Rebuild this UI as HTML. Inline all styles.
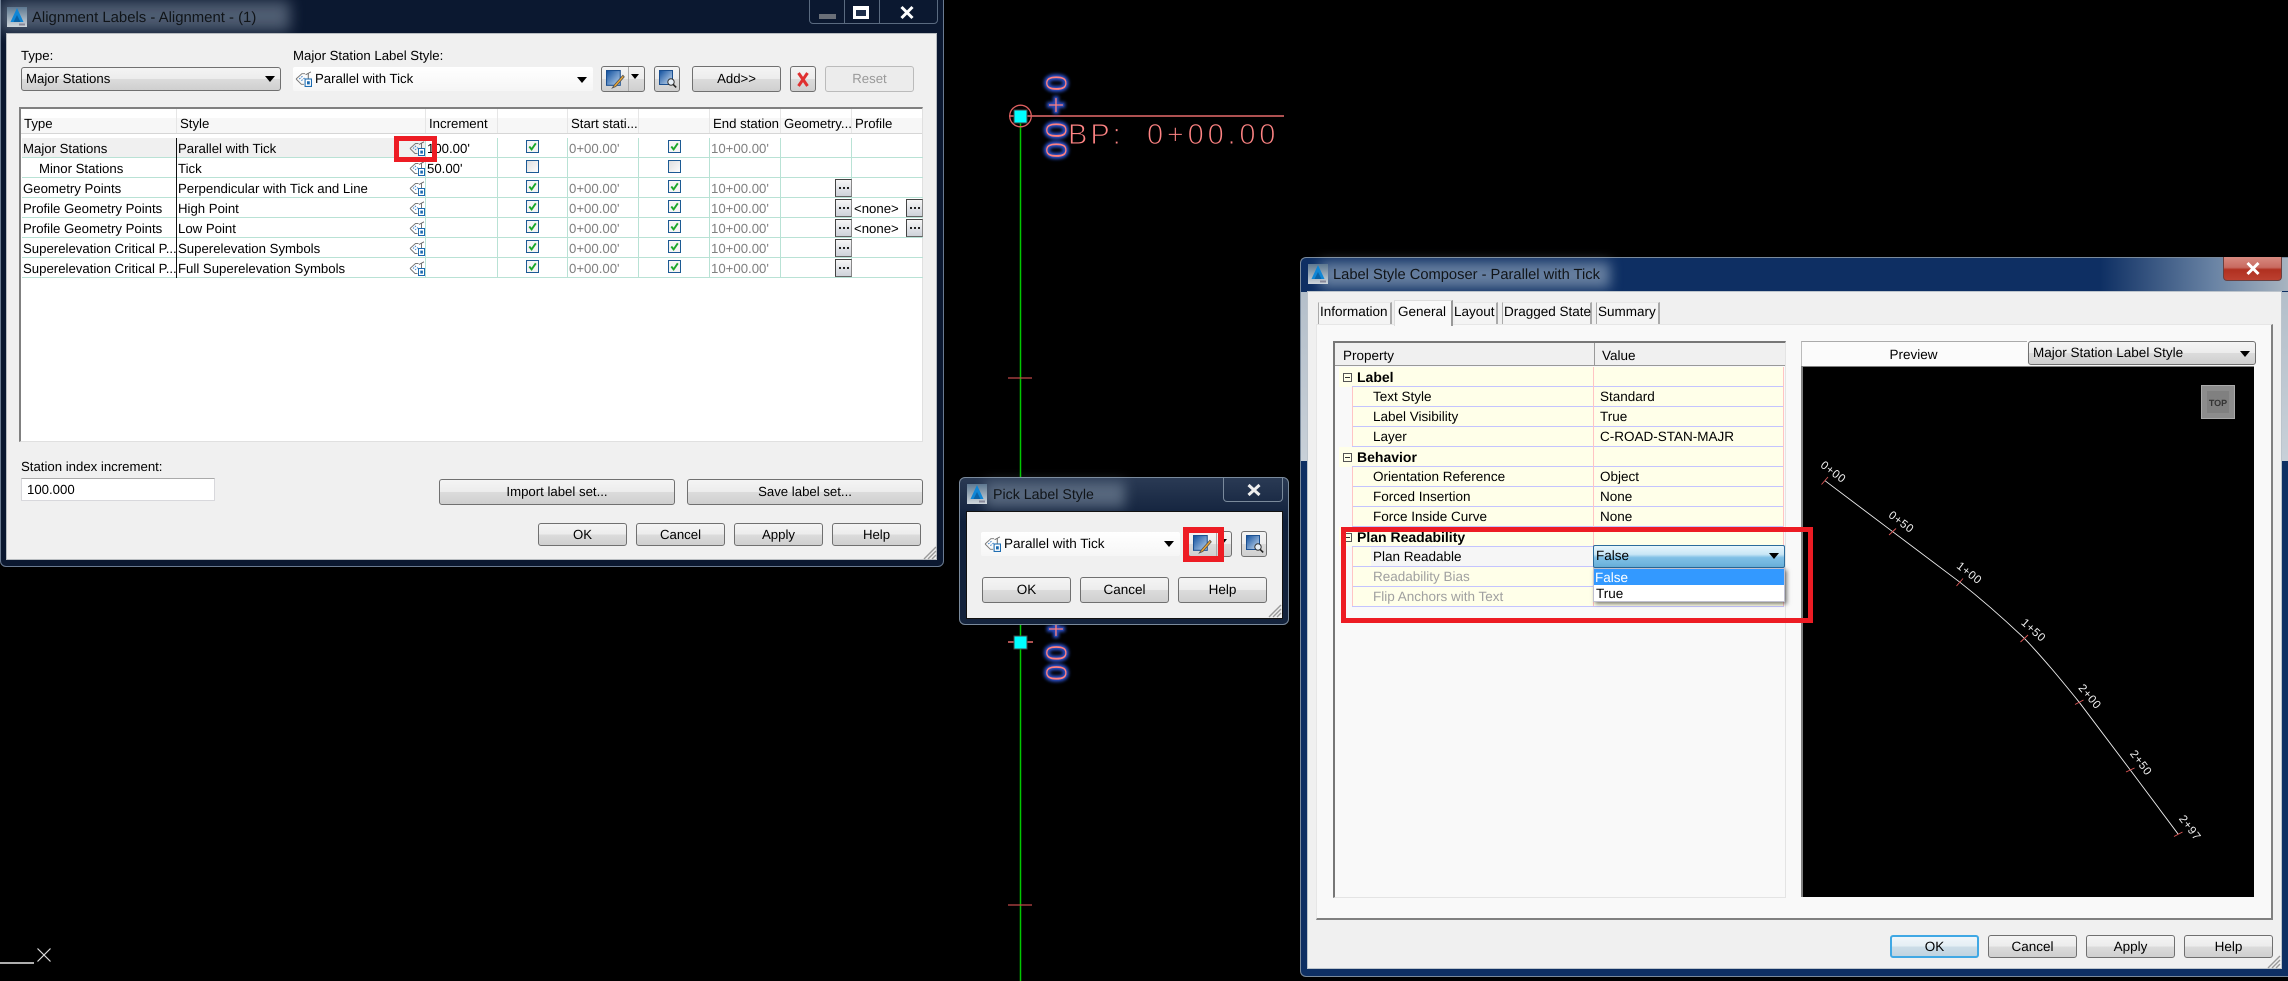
<!DOCTYPE html>
<html><head><meta charset="utf-8"><title>Alignment Labels</title>
<style>
html,body{margin:0;padding:0;background:#000;width:2288px;height:981px;overflow:hidden}
body{position:relative;font-family:"Liberation Sans",sans-serif;font-size:13.5px;color:#000;text-rendering:geometricPrecision}
.a,.t,.b,.r,.c{position:absolute;box-sizing:border-box}
.t{height:20px;line-height:20px;white-space:nowrap;margin-top:1px}
.g{color:#808080}
.d{color:#a0a0a0}
.h{font-weight:bold;font-size:14px}
.b{border:1px solid #707070;border-radius:3px;background:linear-gradient(#f4f4f4 0,#ececec 50%,#dcdcdc 50%,#cfcfcf 100%);text-align:center;white-space:nowrap}
.r{border:5px solid #ed1c24;z-index:5}
.c{background:linear-gradient(#fff,#f6f6f6);border-radius:2px}
.l{position:absolute}
svg.i{position:absolute;overflow:visible}
.ar{position:absolute;width:0;height:0;border-left:5px solid transparent;border-right:5px solid transparent;border-top:6px solid #000}
.e{position:absolute;box-sizing:border-box;width:17px;height:18px;border:1px solid #444;border-right-color:#888;border-bottom-color:#666;background:linear-gradient(#f6f6f6,#ced2da)}
.e:after{content:"";position:absolute;left:3px;top:7px;width:2px;height:2px;background:#222;box-shadow:4px 0 #222,8px 0 #222}
</style></head><body>

<svg width="0" height="0" style="position:absolute"><defs>
<symbol id="tag" viewBox="0 0 16 15">
<path d="M1 7.5L6.5 2.5H9.5M1 7.5L6 12.5H8.5" fill="none" stroke="#777" stroke-width=".9"/>
<path d="M4 7.5L7.5 4.5M6 9L9 6.5" fill="none" stroke="#3a80c8" stroke-width=".9" stroke-dasharray="1.5 1"/>
<path d="M10 3.5L15 .8M12.5 2V7" fill="none" stroke="#666" stroke-width=".9"/>
<rect x="9.5" y="7.5" width="6" height="7" fill="#fff" stroke="#1a6ab0"/>
<rect x="11.3" y="9.6" width="2.6" height="3" fill="#1a6ab0"/>
</symbol>
<symbol id="chk" viewBox="0 0 13 13">
<rect x=".5" y=".5" width="12" height="12" fill="#f4f4f4" stroke="#1c5a94"/>
<path d="M3.3 6.5L5.6 9.4L9.8 3.3" fill="none" stroke="#1aa82a" stroke-width="1.9"/>
</symbol>
<symbol id="unc" viewBox="0 0 13 13">
<linearGradient id="ug" x1="0" y1="0" x2="1" y2="1"><stop offset="0" stop-color="#dcdcdc"/><stop offset="1" stop-color="#fff"/></linearGradient>
<rect x=".5" y=".5" width="12" height="12" fill="url(#ug)" stroke="#1c5a94"/>
</symbol>
<symbol id="cad" viewBox="0 0 20 20">
<linearGradient id="cg" x1="0" y1="0" x2="0" y2="1"><stop offset="0" stop-color="#5d7890"/><stop offset="1" stop-color="#cfd6dc"/></linearGradient>
<rect width="20" height="20" fill="url(#cg)"/>
<path d="M10 1L16.5 15H3.5Z" fill="#0f86d6"/>
<path d="M10 8L13.5 15H6.5Z" fill="#0a63a8"/>
<rect x="12" y="16.5" width="6" height="2" fill="#889"/>
</symbol>
<symbol id="edit" viewBox="0 0 18 18">
<linearGradient id="eg" x1="0" y1="0" x2="1" y2="1"><stop offset="0" stop-color="#0f4f9e"/><stop offset="1" stop-color="#bcd4ee"/></linearGradient>
<rect x=".5" y=".5" width="13" height="14" fill="url(#eg)" stroke="#1a4f90"/>
<path d="M16 5L8 14L6 17L9.3 15.6L17.3 6.5Z" fill="#f0a830" stroke="#555" stroke-width=".8"/>
</symbol>
<symbol id="view" viewBox="0 0 18 18">
<linearGradient id="vg" x1="0" y1="0" x2="1" y2="1"><stop offset="0" stop-color="#0f4f9e"/><stop offset="1" stop-color="#cfe0f2"/></linearGradient>
<rect x=".5" y=".5" width="13" height="14" fill="url(#vg)" stroke="#1a4f90"/>
<circle cx="12" cy="12" r="3.2" fill="#e6eef6" stroke="#333"/>
<path d="M14.2 14.4L17.2 17.4" stroke="#222" stroke-width="1.6"/>
</symbol>
<symbol id="grip" viewBox="0 0 14 14">
<path d="M13 1L1 13M13 5L5 13M13 9L9 13" stroke="#9a9a9a" stroke-width="1.4"/>
</symbol>
<filter id="bl" x="-30%" y="-30%" width="160%" height="160%"><feGaussianBlur stdDeviation="1.6"/></filter>
</defs></svg>

<!-- CAD background -->
<svg class="i" style="left:0;top:0" width="2288" height="981">
<path d="M1020.5 123V981" stroke="#00c800" stroke-width="1.5"/>
<path d="M1008 378H1032M1008 905H1032" stroke="#c04848" stroke-width="1.2"/>
<path d="M1009 116H1284" stroke="#e86c6c" stroke-width="1.5"/>
<circle cx="1020.5" cy="116" r="10.8" fill="none" stroke="#e06060" stroke-width="1.3"/>
<rect x="1014" y="110" width="13" height="13" fill="#00ffff" stroke="#444"/>
<path d="M1008 642H1033" stroke="#e86c6c" stroke-width="1.5"/>
<rect x="1014" y="636" width="13" height="13" fill="#00ffff" stroke="#444"/>

<g font-family="'Liberation Sans',sans-serif" font-size="30">
<g filter="url(#bl)" fill="none" stroke="#2a50c8" stroke-width="3.5">
<text transform="translate(1046,0) rotate(90)" x="74.7 96.2 121.7 141.7">0+00</text>
<text transform="translate(1046,0) rotate(90)" x="599 620.2 644.5 664.5">0+00</text>
</g>
<g fill="#ff8080" stroke="#2848b0" stroke-width=".8">
<text transform="translate(1046,0) rotate(90)" x="74.7 96.2 121.7 141.7">0+00</text>
<text transform="translate(1046,0) rotate(90)" x="599 620.2 644.5 664.5">0+00</text>
</g>
</g>
<g font-family="'Liberation Sans',sans-serif" font-size="29" fill="#ff8484" stroke="#000" stroke-width="1" style="paint-order:fill stroke">
<text x="1068" y="144" letter-spacing="3">BP:</text>
<text x="1147" y="144" letter-spacing="3.8">0+00.00</text>
</g>
<path d="M0 963H34" stroke="#e8e8e8" stroke-width="1.4"/>
<path d="M37.5 948.5L50.5 961.5M50.5 948.5L37.5 961.5" stroke="#ddd" stroke-width="1.2"/>
</svg>

<!-- ============ Alignment Labels dialog ============ -->
<div style="font-size:13.2px">
<div class="a" style="left:0;top:-8px;width:944px;height:575px;background:#0b1830;border:1px solid #6a7a90;border-radius:6px"></div>
<div class="a" style="left:0;top:1px;width:290px;height:30px;background:rgba(190,205,220,.38);filter:blur(7px)"></div>
<svg class="i" style="left:7px;top:7px" width="20" height="20"><use href="#cad"/></svg>
<div class="t" style="left:32px;top:7px;font-size:14.9px;color:#101418">Alignment Labels - Alignment - (1)</div>
<div class="a" style="left:809px;top:-3px;width:129px;height:27px;border:1px solid #5a6a80;border-radius:0 0 4px 4px"></div>
<div class="a" style="left:844px;top:0;width:1px;height:24px;background:#5a6a80"></div>
<div class="a" style="left:879px;top:0;width:1px;height:24px;background:#5a6a80"></div>
<div class="a" style="left:819px;top:14px;width:17px;height:5px;background:#6a6f78"></div>
<div class="a" style="left:853px;top:6px;width:16px;height:13px;border:3px solid #fff;border-top-width:4px;background:#20304c"></div>
<svg class="i" style="left:900px;top:6px" width="14" height="13"><path d="M1.5 1L12.5 12M12.5 1L1.5 12" stroke="#fff" stroke-width="3"/></svg>

<div class="a" style="left:6px;top:33px;width:931px;height:527px;background:#f0f0f0;border:1px solid #b8bcc0"></div>

<div class="t" style="left:21px;top:45px">Type:</div>
<div class="t" style="left:293px;top:45px">Major Station Label Style:</div>
<div class="b" style="left:21px;top:67px;width:260px;height:24px;text-align:left;padding-left:4px;line-height:22px">Major Stations</div>
<div class="ar" style="left:265px;top:76px"></div>
<div class="c" style="left:293px;top:67px;width:300px;height:24px"></div>
<svg class="i" style="left:295px;top:71px" width="17" height="16"><use href="#tag"/></svg>
<div class="t" style="left:315px;top:68px">Parallel with Tick</div>
<div class="ar" style="left:577px;top:77px"></div>
<div class="b" style="left:601px;top:66px;width:44px;height:26px"></div>
<div class="a" style="left:628px;top:67px;width:1px;height:24px;background:#aaa"></div>
<svg class="i" style="left:606px;top:70px" width="19" height="19"><use href="#edit"/></svg>
<div class="ar" style="left:631px;top:74px;border-left-width:4px;border-right-width:4px;border-top-width:5px"></div>
<div class="b" style="left:654px;top:66px;width:26px;height:26px"></div>
<svg class="i" style="left:659px;top:70px" width="18" height="18"><use href="#view"/></svg>
<div class="b" style="left:692px;top:66px;width:89px;height:26px;line-height:24px">Add&gt;&gt;</div>
<div class="b" style="left:790px;top:66px;width:26px;height:26px"></div>
<svg class="i" style="left:797px;top:72px" width="12" height="15"><path d="M1.5 1L10.5 14M10.5 1L1.5 14" stroke="#e03030" stroke-width="3"/></svg>
<div class="b" style="left:825px;top:66px;width:89px;height:26px;line-height:24px;background:#ececec;border-color:#bbb;color:#999">Reset</div>

<!-- table -->
<div class="a" style="left:19px;top:107px;width:904px;height:335px;background:#fff;border-top:2px solid #808080;border-left:2px solid #808080;border-right:1px solid #e0e0e0;border-bottom:1px solid #e0e0e0"></div>
<div class="a" style="left:21px;top:118px;width:901px;height:15px;background:#f7f7f7"></div>
<div class="a" style="left:21px;top:133px;width:901px;height:1px;background:#d6d6d6"></div>
<div class="a" style="left:176px;top:109px;width:1px;height:24px;background:#e6e6e6"></div>
<div class="a" style="left:425px;top:109px;width:1px;height:24px;background:#e6e6e6"></div>
<div class="a" style="left:497px;top:109px;width:1px;height:24px;background:#e6e6e6"></div>
<div class="a" style="left:567px;top:109px;width:1px;height:24px;background:#e6e6e6"></div>
<div class="a" style="left:638px;top:109px;width:1px;height:24px;background:#e6e6e6"></div>
<div class="a" style="left:709px;top:109px;width:1px;height:24px;background:#e6e6e6"></div>
<div class="a" style="left:780px;top:109px;width:1px;height:24px;background:#e6e6e6"></div>
<div class="a" style="left:851px;top:109px;width:1px;height:24px;background:#e6e6e6"></div>
<div class="t" style="left:24px;top:113px">Type</div>
<div class="t" style="left:180px;top:113px">Style</div>
<div class="t" style="left:429px;top:113px">Increment</div>
<div class="t" style="left:571px;top:113px">Start stati...</div>
<div class="t" style="left:713px;top:113px">End station</div>
<div class="t" style="left:784px;top:113px">Geometry...</div>
<div class="t" style="left:855px;top:113px">Profile</div>

<div class="a" style="left:22px;top:138px;width:403px;height:19px;background:#f0f0f0"></div>
<div class="a" style="left:22px;top:157px;width:901px;height:1px;background:#b9e2d5"></div>
<div class="a" style="left:22px;top:177px;width:901px;height:1px;background:#b9e2d5"></div>
<div class="a" style="left:22px;top:197px;width:901px;height:1px;background:#b9e2d5"></div>
<div class="a" style="left:22px;top:217px;width:901px;height:1px;background:#b9e2d5"></div>
<div class="a" style="left:22px;top:237px;width:901px;height:1px;background:#b9e2d5"></div>
<div class="a" style="left:22px;top:257px;width:901px;height:1px;background:#b9e2d5"></div>
<div class="a" style="left:22px;top:277px;width:901px;height:1px;background:#b9e2d5"></div>
<div class="a" style="left:176px;top:138px;width:1px;height:140px;background:#111"></div>
<div class="a" style="left:425px;top:138px;width:1px;height:140px;background:#b9e2d5"></div>
<div class="a" style="left:497px;top:138px;width:1px;height:140px;background:#b9e2d5"></div>
<div class="a" style="left:567px;top:138px;width:1px;height:140px;background:#b9e2d5"></div>
<div class="a" style="left:638px;top:138px;width:1px;height:140px;background:#b9e2d5"></div>
<div class="a" style="left:709px;top:138px;width:1px;height:140px;background:#b9e2d5"></div>
<div class="a" style="left:780px;top:138px;width:1px;height:140px;background:#b9e2d5"></div>
<div class="a" style="left:851px;top:138px;width:1px;height:140px;background:#b9e2d5"></div>

<div class="t" style="left:23px;top:138px">Major Stations</div><div class="t" style="left:178px;top:138px">Parallel with Tick</div><div class="t" style="left:427px;top:138px">100.00'</div>
<div class="t" style="left:39px;top:158px">Minor Stations</div><div class="t" style="left:178px;top:158px">Tick</div><div class="t" style="left:427px;top:158px">50.00'</div>
<div class="t" style="left:23px;top:178px">Geometry Points</div><div class="t" style="left:178px;top:178px">Perpendicular with Tick and Line</div>
<div class="t" style="left:23px;top:198px">Profile Geometry Points</div><div class="t" style="left:178px;top:198px">High Point</div>
<div class="t" style="left:23px;top:218px">Profile Geometry Points</div><div class="t" style="left:178px;top:218px">Low Point</div>
<div class="t" style="left:23px;top:238px">Superelevation Critical P...</div><div class="t" style="left:178px;top:238px">Superelevation Symbols</div>
<div class="t" style="left:23px;top:258px">Superelevation Critical P...</div><div class="t" style="left:178px;top:258px">Full Superelevation Symbols</div>

<svg class="i" style="left:409px;top:141px" width="16" height="15"><use href="#tag"/></svg>
<svg class="i" style="left:409px;top:161px" width="16" height="15"><use href="#tag"/></svg>
<svg class="i" style="left:409px;top:181px" width="16" height="15"><use href="#tag"/></svg>
<svg class="i" style="left:409px;top:201px" width="16" height="15"><use href="#tag"/></svg>
<svg class="i" style="left:409px;top:221px" width="16" height="15"><use href="#tag"/></svg>
<svg class="i" style="left:409px;top:241px" width="16" height="15"><use href="#tag"/></svg>
<svg class="i" style="left:409px;top:261px" width="16" height="15"><use href="#tag"/></svg>

<svg class="i" style="left:526px;top:140px" width="13" height="13"><use href="#chk"/></svg><svg class="i" style="left:668px;top:140px" width="13" height="13"><use href="#chk"/></svg>
<svg class="i" style="left:526px;top:160px" width="13" height="13"><use href="#unc"/></svg><svg class="i" style="left:668px;top:160px" width="13" height="13"><use href="#unc"/></svg>
<svg class="i" style="left:526px;top:180px" width="13" height="13"><use href="#chk"/></svg><svg class="i" style="left:668px;top:180px" width="13" height="13"><use href="#chk"/></svg>
<svg class="i" style="left:526px;top:200px" width="13" height="13"><use href="#chk"/></svg><svg class="i" style="left:668px;top:200px" width="13" height="13"><use href="#chk"/></svg>
<svg class="i" style="left:526px;top:220px" width="13" height="13"><use href="#chk"/></svg><svg class="i" style="left:668px;top:220px" width="13" height="13"><use href="#chk"/></svg>
<svg class="i" style="left:526px;top:240px" width="13" height="13"><use href="#chk"/></svg><svg class="i" style="left:668px;top:240px" width="13" height="13"><use href="#chk"/></svg>
<svg class="i" style="left:526px;top:260px" width="13" height="13"><use href="#chk"/></svg><svg class="i" style="left:668px;top:260px" width="13" height="13"><use href="#chk"/></svg>

<div class="t g" style="left:569px;top:138px">0+00.00'</div><div class="t g" style="left:711px;top:138px">10+00.00'</div>
<div class="t g" style="left:569px;top:178px">0+00.00'</div><div class="t g" style="left:711px;top:178px">10+00.00'</div>
<div class="t g" style="left:569px;top:198px">0+00.00'</div><div class="t g" style="left:711px;top:198px">10+00.00'</div>
<div class="t g" style="left:569px;top:218px">0+00.00'</div><div class="t g" style="left:711px;top:218px">10+00.00'</div>
<div class="t g" style="left:569px;top:238px">0+00.00'</div><div class="t g" style="left:711px;top:238px">10+00.00'</div>
<div class="t g" style="left:569px;top:258px">0+00.00'</div><div class="t g" style="left:711px;top:258px">10+00.00'</div>

<div class="e" style="left:835px;top:179px"></div>
<div class="e" style="left:835px;top:199px"></div>
<div class="e" style="left:835px;top:219px"></div>
<div class="e" style="left:835px;top:239px"></div>
<div class="e" style="left:835px;top:259px"></div>
<div class="e" style="left:906px;top:199px"></div>
<div class="e" style="left:906px;top:219px"></div>
<div class="t" style="left:854px;top:198px">&lt;none&gt;</div>
<div class="t" style="left:854px;top:218px">&lt;none&gt;</div>

<div class="r" style="left:394px;top:136px;width:43px;height:26px"></div>

<div class="t" style="left:21px;top:456px">Station index increment:</div>
<div class="a" style="left:21px;top:478px;width:194px;height:23px;background:#fff;border:1px solid #d8d8dc;border-top-color:#aaa"></div>
<div class="t" style="left:27px;top:479px">100.000</div>
<div class="b" style="left:439px;top:479px;width:236px;height:26px;line-height:24px">Import label set...</div>
<div class="b" style="left:687px;top:479px;width:236px;height:26px;line-height:24px">Save label set...</div>
<div class="b" style="left:538px;top:523px;width:89px;height:23px;line-height:21px">OK</div>
<div class="b" style="left:636px;top:523px;width:89px;height:23px;line-height:21px">Cancel</div>
<div class="b" style="left:734px;top:523px;width:89px;height:23px;line-height:21px">Apply</div>
<div class="b" style="left:832px;top:523px;width:89px;height:23px;line-height:21px">Help</div>
<svg class="i" style="left:923px;top:546px" width="14" height="14"><use href="#grip"/></svg>
</div>

<!-- ============ Pick Label Style dialog ============ -->
<div class="a" style="left:959px;top:477px;width:330px;height:148px;background:linear-gradient(#2a3a54,#0f1f3a 30%,#14233c);border:1px solid #7a8a9c;border-radius:6px"></div>
<div class="a" style="left:985px;top:482px;width:140px;height:26px;background:rgba(190,205,220,.35);filter:blur(6px)"></div>
<svg class="i" style="left:967px;top:484px" width="20" height="20"><use href="#cad"/></svg>
<div class="t" style="left:993px;top:484px;font-size:14.2px;color:#101418">Pick Label Style</div>
<div class="a" style="left:1223px;top:477px;width:60px;height:25px;border:1px solid #7a8a9c;border-top:0;border-radius:0 0 4px 4px"></div>
<svg class="i" style="left:1247px;top:484px" width="14" height="12"><path d="M1.5 1L12.5 11M12.5 1L1.5 11" stroke="#eee" stroke-width="3"/></svg>
<div class="a" style="left:966px;top:511px;width:317px;height:108px;background:#f0f0f0;border:1px solid #111"></div>
<div class="c" style="left:981px;top:532px;width:199px;height:24px"></div>
<svg class="i" style="left:984px;top:536px" width="17" height="16"><use href="#tag"/></svg>
<div class="t" style="left:1004px;top:533px">Parallel with Tick</div>
<div class="ar" style="left:1164px;top:541px"></div>
<div class="b" style="left:1188px;top:531px;width:44px;height:26px"></div>
<div class="a" style="left:1216px;top:532px;width:1px;height:24px;background:#aaa"></div>
<svg class="i" style="left:1193px;top:535px" width="19" height="19"><use href="#edit"/></svg>
<div class="ar" style="left:1219px;top:539px;border-left-width:4px;border-right-width:4px;border-top-width:5px"></div>
<div class="b" style="left:1241px;top:531px;width:26px;height:26px"></div>
<svg class="i" style="left:1246px;top:535px" width="18" height="18"><use href="#view"/></svg>
<div class="r" style="left:1183px;top:527px;width:41px;height:35px;border-width:6px"></div>
<div class="b" style="left:982px;top:577px;width:89px;height:26px;line-height:24px">OK</div>
<div class="b" style="left:1080px;top:577px;width:89px;height:26px;line-height:24px">Cancel</div>
<div class="b" style="left:1178px;top:577px;width:89px;height:26px;line-height:24px">Help</div>
<svg class="i" style="left:1268px;top:604px" width="14" height="14"><use href="#grip"/></svg>

<!-- ============ Label Style Composer dialog ============ -->
<div class="a" style="left:1300px;top:257px;width:988px;height:720px;background:linear-gradient(#0e2f63 0,#0e2f63 34px,#b4bfca 34px,#c8d0d8 203px,#0e2f63 203px);border:1px solid #7a8a9c;border-right:0;border-radius:6px 0 0 6px"></div>
<div class="a" style="left:2100px;top:258px;width:188px;height:33px;background:linear-gradient(90deg,rgba(120,145,175,0) 0,rgba(120,145,175,.85) 60%,#a8b4c0 100%)"></div>
<div class="a" style="left:1320px;top:262px;width:290px;height:26px;background:rgba(190,205,220,.5);filter:blur(6px)"></div>
<svg class="i" style="left:1308px;top:264px" width="20" height="20"><use href="#cad"/></svg>
<div class="t" style="left:1333px;top:264px;font-size:14.7px;color:#101418">Label Style Composer - Parallel with Tick</div>
<div class="a" style="left:2223px;top:257px;width:59px;height:24px;background:linear-gradient(#d88a80 0,#c86a60 45%,#b03020 55%,#bc4030 100%);border:1px solid #6a4040;border-top:0;border-radius:0 0 4px 4px"></div>
<svg class="i" style="left:2246px;top:262px" width="14" height="13"><path d="M1.5 1L12.5 12M12.5 1L1.5 12" stroke="#fff" stroke-width="3"/></svg>

<div class="a" style="left:1307px;top:291px;width:975px;height:678px;background:#f0f0f0;border:1px solid #bcc4cc"></div>

<!-- tabs -->
<div class="a" style="left:1316px;top:324px;width:957px;height:596px;background:#f9f9f9;border:1px solid #e6e6e6;border-right:2px solid #808080;border-bottom:2px solid #808080"></div>
<div class="a" style="left:1318px;top:302px;width:74px;height:22px;background:#f4f4f4;border-left:1px solid #aaa;border-right:2px solid #aaa;border-top:1px solid #e8e8e8"></div>
<div class="a" style="left:1394px;top:300px;width:59px;height:26px;background:#f9f9f9;border-left:1px solid #ddd;border-right:2px solid #999;border-top:1px solid #ddd"></div>
<div class="a" style="left:1455px;top:302px;width:43px;height:22px;background:#f4f4f4;border-right:2px solid #aaa;border-top:1px solid #e8e8e8"></div>
<div class="a" style="left:1502px;top:302px;width:90px;height:22px;background:#f4f4f4;border-left:1px solid #aaa;border-right:2px solid #aaa;border-top:1px solid #e8e8e8"></div>
<div class="a" style="left:1596px;top:302px;width:64px;height:22px;background:#f4f4f4;border-left:1px solid #aaa;border-right:2px solid #aaa;border-top:1px solid #e8e8e8"></div>
<div class="t" style="left:1320px;top:301px">Information</div>
<div class="t" style="left:1398px;top:301px">General</div>
<div class="t" style="left:1454px;top:301px">Layout</div>
<div class="t" style="left:1504px;top:301px">Dragged State</div>
<div class="t" style="left:1598px;top:301px">Summary</div>

<!-- property grid -->
<div class="a" style="left:1333px;top:341px;width:453px;height:557px;background:#f9f9f9;border-top:2px solid #777;border-left:2px solid #777;border-right:1px solid #e4e4e4;border-bottom:1px solid #e4e4e4"></div>
<div class="a" style="left:1335px;top:343px;width:450px;height:23px;background:#f0f0f0;border-bottom:1px solid #999"></div>
<div class="a" style="left:1594px;top:343px;width:1px;height:23px;background:#999"></div>
<div class="t" style="left:1343px;top:345px">Property</div>
<div class="t" style="left:1602px;top:345px">Value</div>

<div class="a" style="left:1339px;top:367px;width:445px;height:20px;background:#ffffe9"></div>
<div class="a" style="left:1352px;top:387px;width:432px;height:79px;background:#ffffe9"></div>
<div class="a" style="left:1339px;top:447px;width:445px;height:20px;background:#ffffe9"></div>
<div class="a" style="left:1352px;top:467px;width:432px;height:60px;background:#ffffe9"></div>
<div class="a" style="left:1339px;top:527px;width:445px;height:19px;background:#ffffe9"></div>
<div class="a" style="left:1352px;top:546px;width:432px;height:60px;background:#ffffe9"></div>
<div class="a" style="left:1371px;top:547px;width:222px;height:19px;background:#f6f6f6"></div>

<div class="a" style="left:1352px;top:386px;width:432px;height:1px;background:#c4c4ff"></div>
<div class="a" style="left:1352px;top:406px;width:432px;height:1px;background:#c4c4ff"></div>
<div class="a" style="left:1352px;top:426px;width:432px;height:1px;background:#c4c4ff"></div>
<div class="a" style="left:1352px;top:446px;width:432px;height:1px;background:#c4c4ff"></div>
<div class="a" style="left:1352px;top:466px;width:432px;height:1px;background:#c4c4ff"></div>
<div class="a" style="left:1352px;top:486px;width:432px;height:1px;background:#c4c4ff"></div>
<div class="a" style="left:1352px;top:506px;width:432px;height:1px;background:#c4c4ff"></div>
<div class="a" style="left:1352px;top:526px;width:432px;height:1px;background:#c4c4ff"></div>
<div class="a" style="left:1352px;top:546px;width:432px;height:1px;background:#c4c4ff"></div>
<div class="a" style="left:1352px;top:566px;width:432px;height:1px;background:#c4c4ff"></div>
<div class="a" style="left:1352px;top:586px;width:432px;height:1px;background:#c4c4ff"></div>
<div class="a" style="left:1352px;top:606px;width:432px;height:1px;background:#c4c4ff"></div>
<div class="a" style="left:1352px;top:387px;width:1px;height:59px;background:#ffc4c4"></div>
<div class="a" style="left:1352px;top:467px;width:1px;height:59px;background:#ffc4c4"></div>
<div class="a" style="left:1352px;top:547px;width:1px;height:59px;background:#ffc4c4"></div>
<div class="a" style="left:1593px;top:367px;width:1px;height:239px;background:#ffc4c4"></div>
<div class="a" style="left:1783px;top:367px;width:1px;height:239px;background:#ffc4c4"></div>

<div class="a" style="left:1343px;top:373px;width:9px;height:9px;border:1px solid #555;background:#ffffe9"><div class="a" style="left:1px;top:3px;width:5px;height:1px;background:#333"></div></div>
<div class="a" style="left:1343px;top:453px;width:9px;height:9px;border:1px solid #555;background:#ffffe9"><div class="a" style="left:1px;top:3px;width:5px;height:1px;background:#333"></div></div>
<div class="a" style="left:1343px;top:533px;width:9px;height:9px;border:1px solid #555;background:#ffffe9"><div class="a" style="left:1px;top:3px;width:5px;height:1px;background:#333"></div></div>

<div class="t h" style="left:1357px;top:366px">Label</div>
<div class="t" style="left:1373px;top:386px">Text Style</div><div class="t" style="left:1600px;top:386px">Standard</div>
<div class="t" style="left:1373px;top:406px">Label Visibility</div><div class="t" style="left:1600px;top:406px">True</div>
<div class="t" style="left:1373px;top:426px">Layer</div><div class="t" style="left:1600px;top:426px">C-ROAD-STAN-MAJR</div>
<div class="t h" style="left:1357px;top:446px">Behavior</div>
<div class="t" style="left:1373px;top:466px">Orientation Reference</div><div class="t" style="left:1600px;top:466px">Object</div>
<div class="t" style="left:1373px;top:486px">Forced Insertion</div><div class="t" style="left:1600px;top:486px">None</div>
<div class="t" style="left:1373px;top:506px">Force Inside Curve</div><div class="t" style="left:1600px;top:506px">None</div>
<div class="t h" style="left:1357px;top:526px">Plan Readability</div>
<div class="t" style="left:1373px;top:546px">Plan Readable</div>
<div class="t d" style="left:1373px;top:566px">Readability Bias</div>
<div class="t d" style="left:1373px;top:586px">Flip Anchors with Text</div>

<!-- dropdown -->
<div class="a" style="left:1593px;top:545px;width:192px;height:23px;border:1px solid #2c6c9c;border-radius:2px;background:linear-gradient(#e8f6fc 0,#c8e6f6 40%,#80c0e6 55%,#68b0da 100%)"></div>
<div class="t" style="left:1596px;top:545px">False</div>
<div class="ar" style="left:1769px;top:553px"></div>
<div class="a" style="left:1593px;top:568px;width:192px;height:34px;background:#fff;border:1px solid #c0c0d0;box-shadow:2px 2px 4px rgba(0,0,0,.5)"></div>
<div class="a" style="left:1594px;top:569px;width:190px;height:16px;background:#3399ff"></div>
<div class="t" style="left:1595px;top:567px;color:#fff">False</div>
<div class="t" style="left:1596px;top:583px">True</div>

<div class="r" style="left:1341px;top:527px;width:472px;height:96px"></div>

<!-- preview -->
<div class="a" style="left:1801px;top:341px;width:226px;height:26px;background:#fbfbfb;border-top:1px solid #aaa;border-left:1px solid #bbb"></div>
<div class="t" style="left:1801px;top:344px;width:225px;text-align:center">Preview</div>
<div class="b" style="left:2028px;top:341px;width:228px;height:24px;text-align:left;padding-left:4px;line-height:22px">Major Station Label Style</div>
<div class="ar" style="left:2240px;top:351px"></div>
<div class="a" style="left:1801px;top:366px;width:453px;height:531px;background:#000;border-left:2px solid #808080;border-top:1px solid #808080"></div>

<svg class="i" style="left:0;top:0" width="2288" height="981">
<path d="M1825 480.7L1892.7 531.7L1960 582.3C1985 602 2005 620 2024.3 638.3C2045 660 2062 681 2079.3 702.3L2130.3 770L2178.3 834.3" fill="none" stroke="#f0f0f0" stroke-width=".9"/>
<path d="M1821.5 484.5L1828 477M1889 535L1896 528.5M1956.5 586L1963 578.5M2020.5 642L2028 635M2075 704.5L2083.5 700M2126 772L2134.5 768M2174 836.5L2182.5 832" stroke="#e05858" stroke-width=".9"/>
<rect x="2201.5" y="385.5" width="33" height="33" fill="#8c8c8c" stroke="#aaa"/>
<rect x="2207" y="391" width="22" height="22" fill="#808080"/>
<text x="2218" y="406" text-anchor="middle" font-family="'Liberation Sans',sans-serif" font-size="9" font-weight="bold" fill="#333">TOP</text>
<g font-family="'Liberation Sans',sans-serif" font-size="11.5" fill="#f0f0f0" text-anchor="middle">
<text transform="translate(1831,475) rotate(37)" letter-spacing=".6">0+00</text>
<text transform="translate(1899,525) rotate(37)" letter-spacing=".6">0+50</text>
<text transform="translate(1967,576) rotate(38)" letter-spacing=".6">1+00</text>
<text transform="translate(2031,633) rotate(42)" letter-spacing=".6">1+50</text>
<text transform="translate(2087,699) rotate(50)" letter-spacing=".6">2+00</text>
<text transform="translate(2138,765) rotate(53)" letter-spacing=".6">2+50</text>
<text transform="translate(2187,830) rotate(53)" letter-spacing=".6">2+97</text>
</g>
</svg>

<div class="b" style="left:1890px;top:935px;width:89px;height:23px;line-height:20px;border:2px solid #40a8e4;background:linear-gradient(#f0f6fa 0,#e4eef4 50%,#ccdde8 50%,#c0d4e0 100%)">OK</div>
<div class="b" style="left:1988px;top:935px;width:89px;height:23px;line-height:21px">Cancel</div>
<div class="b" style="left:2086px;top:935px;width:89px;height:23px;line-height:21px">Apply</div>
<div class="b" style="left:2184px;top:935px;width:89px;height:23px;line-height:21px">Help</div>
<svg class="i" style="left:2267px;top:955px" width="14" height="14"><use href="#grip"/></svg>

</body></html>
